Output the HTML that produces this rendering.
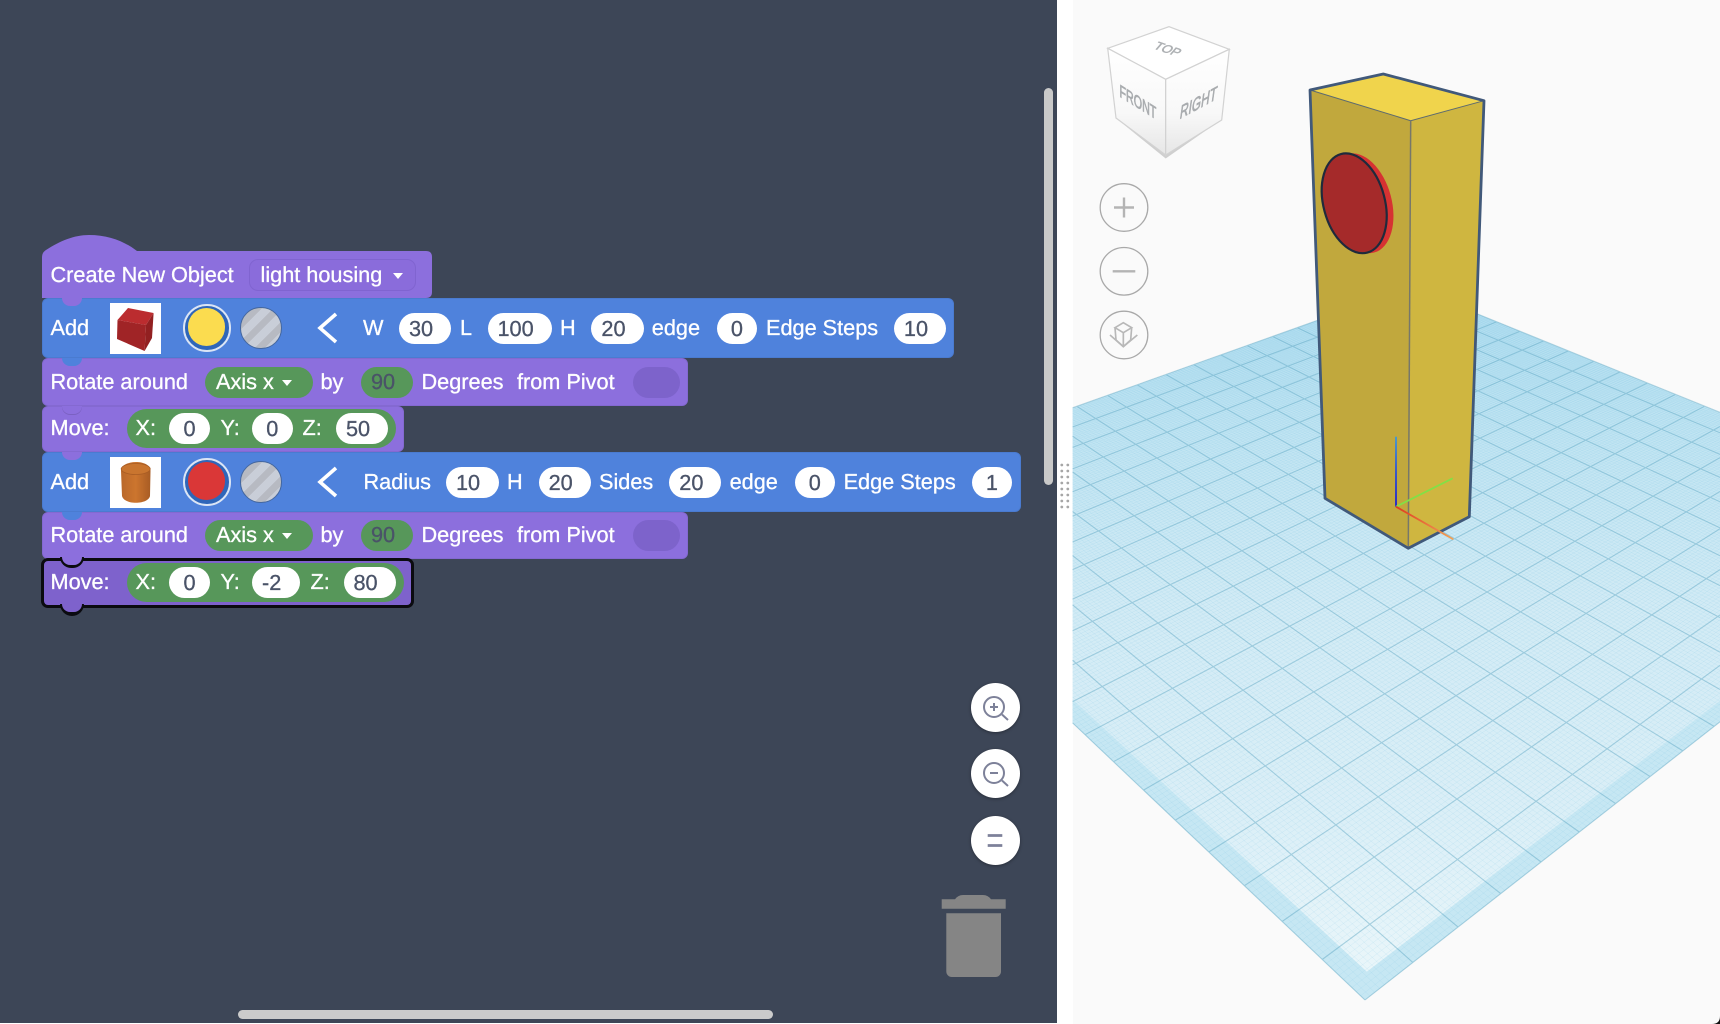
<!DOCTYPE html>
<html><head><meta charset="utf-8"><title>Blocks</title>
<style>
html,body{margin:0;padding:0;width:1720px;height:1024px;overflow:hidden;background:#fff;font-family:"Liberation Sans",Arial,sans-serif;text-rendering:geometricPrecision}
body{filter:blur(.35px)}
#left{position:absolute;left:0;top:0;width:1057px;height:1023px;background:#3d4657}
#view{position:absolute;left:1072.6px;top:0;width:647.4px;height:1024px;background:#fafafa}
.b{position:absolute;border-radius:6px;box-shadow:inset 0 0 0 1px rgba(0,0,0,.05)}
.p{background:#8c6fdd}.u{background:#4f82dc}
.bump{position:absolute;left:62px;width:20px;height:8px;border-radius:0 0 10px 10px}
.r{position:absolute;left:0;width:1050px;height:31px}
.t{position:absolute;top:-1px;line-height:31px;font-size:21.7px;color:#fff;white-space:nowrap;-webkit-text-stroke:.3px currentColor}
.i{position:absolute;top:0;height:31px;border-radius:16px;background:#fff;line-height:31px;font-size:21.7px;color:#4a5368;box-sizing:border-box;padding-left:10px;white-space:nowrap;-webkit-text-stroke:.3px currentColor}
.c{text-align:center;padding-left:0}
.g{position:absolute;background:#57975a;border-radius:20px}
.tri{position:absolute;width:0;height:0;border-left:5px solid transparent;border-right:5px solid transparent;border-top:6px solid #fff;top:13px}
.th{position:absolute;left:110px;width:51px;height:51px;background:#fff}
.sw{position:absolute;left:183.2px;width:47.6px;height:47.6px;border-radius:50%;box-sizing:border-box;border:2.7px solid #dbe5f5;background:#2f66b9}
.sw i{position:absolute;left:2.4px;top:2.4px;width:37.4px;height:37.4px;border-radius:50%;display:block}
.ha{position:absolute;left:240px;width:41.6px;height:41.6px;border-radius:50%;box-sizing:border-box;border:1px solid #44679f;background:repeating-linear-gradient(135deg,#c9ced8 0 8px,#b7bac2 8px 15px)}
.zb{position:absolute;left:970.5px;width:49px;height:49px;border-radius:50%;background:#fff;box-shadow:0 1px 3px rgba(0,0,0,.35)}
svg{position:absolute}
</style></head>
<body>
<div id="left"></div>

<svg style="left:0;top:0" width="1720" height="1024">
<path d="M42 298V258C42 254 43 252 46 250C60 241 74 235 89 235C108 235 124 241 137 251H426C430 251 432 253 432 257V292C432 296 430 298 426 298Z" fill="#8c6fdd"/>
</svg>

<div class="b u" style="left:42px;top:298px;width:912.3px;height:60px"></div>
<div class="b p" style="left:42px;top:358px;width:646.2px;height:48px"></div>
<div class="b p" style="left:42px;top:406px;width:362px;height:46px"></div>
<div class="b u" style="left:42px;top:452px;width:978.7px;height:60px"></div>
<div class="b p" style="left:42px;top:512px;width:646.2px;height:47px"></div>
<div class="b" style="background:#7e62cc;border:3px solid #0b0b10;box-sizing:border-box;border-radius:7px;left:41px;width:372.5px;top:557.5px;height:50.5px;box-shadow:none"></div>

<div class="bump p" style="top:298px"></div>
<div class="bump u" style="top:358px"></div>
<div class="bump p" style="top:406px;box-shadow:0 1px 0 rgba(0,0,0,.12)"></div>
<div class="bump p" style="top:452px"></div>
<div class="bump u" style="top:512px"></div>
<div class="bump" style="top:557px;left:60px;width:24px;height:11px;background:#0b0b10;border-radius:0 0 12px 12px"></div>
<div class="bump p" style="top:557px;height:8px"></div>
<div class="bump" style="top:604px;left:60px;width:24px;height:11.5px;background:#0b0b10;border-radius:0 0 12px 12px"></div>
<div class="bump" style="top:604px;background:#7e62cc;height:8px"></div>

<!-- Create -->
<div class="r" style="top:259.5px">
<div class="t" style="left:50.5px">Create New Object</div>
<div style="position:absolute;left:249px;top:-.5px;width:167px;height:32px;border-radius:9px;border:1px solid #8064d0;box-sizing:border-box;background:#8a6cdb"></div>
<div class="t" style="left:260.5px">light housing</div>
<div class="tri" style="left:393px"></div>
</div>

<!-- Add 1 -->
<div class="th" style="top:303px"></div>
<svg style="left:0;top:0" width="200" height="400">
<polygon points="117.500,320 128,308 153.600,313 146,325" fill="#bb2c2f"/>
<polygon points="117.500,320 146,325 144.600,351 117,339" fill="#a02426"/>
<polygon points="146,325 153.600,313 152,338 144.600,351" fill="#922021"/>
</svg>
<div class="sw" style="top:304px"><i style="background:#fbdc4f"></i></div>
<div class="ha" style="top:307px"></div>
<svg style="left:0;top:0" width="400" height="400"><path d="M336 314L320 328L336 342" fill="none" stroke="#fff" stroke-width="3.600"/></svg>
<div class="r" style="top:312.5px">
<div class="t" style="left:50.5px">Add</div>
<div class="t" style="left:363px">W</div>
<div class="i" style="left:399px;width:52px">30</div>
<div class="t" style="left:460px">L</div>
<div class="i" style="left:487.5px;width:64.5px">100</div>
<div class="t" style="left:560px">H</div>
<div class="i" style="left:591.4px;width:52.2px">20</div>
<div class="t" style="left:651.8px">edge</div>
<div class="i c" style="left:716.8px;width:40.2px">0</div>
<div class="t" style="left:766px">Edge Steps</div>
<div class="i" style="left:893.9px;width:52.1px">10</div>
</div>

<!-- Rotate 1 -->
<div class="r" style="top:366.5px">
<div class="t" style="left:50.5px">Rotate around</div>
<div class="g" style="left:205px;top:0;width:107.5px;height:31px"></div>
<div class="t" style="left:216px">Axis x</div>
<div class="tri" style="left:282px"></div>
<div class="t" style="left:320.5px">by</div>
<div class="g" style="left:361px;top:0;width:51.5px;height:31px"></div>
<div class="t" style="left:371px;color:#4a5368">90</div>
<div class="t" style="left:421.5px">Degrees</div>
<div class="t" style="left:517px">from Pivot</div>
<div class="g" style="left:632.900px;top:0;width:47.1px;height:31px;background:#7d63cb"></div>
</div>

<!-- Move 1 -->
<div class="g" style="left:127px;top:409px;width:269px;height:39px"></div>
<div class="r" style="top:413px">
<div class="t" style="left:50.5px">Move:</div>
<div class="t" style="left:135.5px">X:</div>
<div class="i c" style="left:169px;width:41px">0</div>
<div class="t" style="left:220.5px">Y:</div>
<div class="i c" style="left:252px;width:40.5px">0</div>
<div class="t" style="left:302.5px">Z:</div>
<div class="i" style="left:336px;width:52px">50</div>
</div>

<!-- Add 2 -->
<div class="th" style="top:456.5px"></div>
<svg style="left:0;top:0" width="200" height="520">
<defs><linearGradient id="cy" x1="0" x2="1" y1="0" y2="0"><stop offset="0" stop-color="#b9682a"/><stop offset=".5" stop-color="#cc752e"/><stop offset="1" stop-color="#a85c24"/></linearGradient></defs>
<path d="M121 471C121 459 151 459 150.500 471L150 496C148 505 124 505 122 496Z" fill="url(#cy)"/>
<ellipse cx="135.700" cy="469" rx="14.500" ry="5.500" fill="#c9752f" stroke="#a85c24" stroke-width=".8"/>
</svg>
<div class="sw" style="top:458px"><i style="background:#da3737"></i></div>
<div class="ha" style="top:461px"></div>
<svg style="left:0;top:0" width="400" height="520"><path d="M336 468L320 482L336 496" fill="none" stroke="#fff" stroke-width="3.600"/></svg>
<div class="r" style="top:466.5px">
<div class="t" style="left:50.5px">Add</div>
<div class="t" style="left:363.5px">Radius</div>
<div class="i" style="left:446px;width:52.5px">10</div>
<div class="t" style="left:507px">H</div>
<div class="i" style="left:538.6px;width:52.1px">20</div>
<div class="t" style="left:599px">Sides</div>
<div class="i" style="left:669.3px;width:52.1px">20</div>
<div class="t" style="left:729.6px">edge</div>
<div class="i c" style="left:794.6px;width:40.4px">0</div>
<div class="t" style="left:843.6px">Edge Steps</div>
<div class="i c" style="left:971.8px;width:40.2px">1</div>
</div>

<!-- Rotate 2 -->
<div class="r" style="top:519.5px">
<div class="t" style="left:50.5px">Rotate around</div>
<div class="g" style="left:205px;top:0;width:107.5px;height:31px"></div>
<div class="t" style="left:216px">Axis x</div>
<div class="tri" style="left:282px"></div>
<div class="t" style="left:320.5px">by</div>
<div class="g" style="left:361px;top:0;width:51.5px;height:31px"></div>
<div class="t" style="left:371px;color:#4a5368">90</div>
<div class="t" style="left:421.5px">Degrees</div>
<div class="t" style="left:517px">from Pivot</div>
<div class="g" style="left:632.900px;top:0;width:47.1px;height:31px;background:#7d63cb"></div>
</div>

<!-- Move 2 -->
<div class="g" style="left:127px;top:563px;width:276.5px;height:39px"></div>
<div class="r" style="top:567px">
<div class="t" style="left:50.5px">Move:</div>
<div class="t" style="left:135.5px">X:</div>
<div class="i c" style="left:169px;width:41px">0</div>
<div class="t" style="left:220.5px">Y:</div>
<div class="i" style="left:252px;width:48px">-2</div>
<div class="t" style="left:310.5px">Z:</div>
<div class="i" style="left:343.5px;width:52.5px">80</div>
</div>

<!-- scrollbars -->
<div style="position:absolute;left:1043.5px;top:88px;width:9.5px;height:397px;border-radius:5px;background:#c9c9c9"></div>
<div style="position:absolute;left:238px;top:1010px;width:535px;height:9px;border-radius:5px;background:#cbcbcb"></div>

<!-- zoom buttons -->
<div class="zb" style="top:682.500px"></div>
<div class="zb" style="top:748.500px"></div>
<div class="zb" style="top:815.500px"></div>
<svg style="left:0;top:0" width="1060" height="1024" fill="none" stroke="#7d8199" stroke-width="2">
<circle cx="994" cy="707" r="10"/><path d="M1002 714.500L1008 720M990 707H998M994 703V711"/>
<circle cx="994" cy="773" r="10"/><path d="M1002 780.500L1008 786M990 773H998"/>
<path d="M987.700 835.500H1002.300M987.700 845.500H1002.300" stroke-width="2.800"/>
<path d="M941.700 908.700V899.300H955Q958 895 963 895H983Q988 895 991 899.300H1005.700V908.700Z" fill="#858585" stroke="none"/>
<path d="M946.300 913.300H1001V971.500A5.500 5.500 0 0 1 995.500 977H951.800A5.500 5.500 0 0 1 946.300 971.500Z" fill="#858585" stroke="none"/>
</svg>

<!-- viewer -->
<div id="view"></div>
<svg id="plate" style="left:0;top:0" width="1720" height="1024" viewBox="0 0 1720 1024">
<defs>
<linearGradient id="pg" gradientUnits="userSpaceOnUse" x1="0" y1="290" x2="0" y2="1000">
<stop offset="0" stop-color="#aedcef"/><stop offset=".2" stop-color="#c0e4f2"/><stop offset=".45" stop-color="#d2ebf5"/><stop offset=".75" stop-color="#dbeff7"/><stop offset="1" stop-color="#ecf7fa"/>
</linearGradient>
</defs>
<polygon points="1072.600,408 1411,287 1720,412.600 1720,721.700 1365,1000 1072.600,723" fill="url(#pg)"/>
<path id="band" fill="#c6e7f3"/>
<path id="mn" fill="none" stroke="#7cc4e2" stroke-width=".5" opacity=".22"/>
<path id="mj" fill="none" stroke="#4f9dbd" stroke-width="1.100" opacity=".42"/>
</svg>
<script>
(function(){
var P=[[1411,287],[1980,518],[1365,1000],[831,494]];
var x0=P[0][0],y0=P[0][1],x1=P[1][0],y1=P[1][1],x2=P[2][0],y2=P[2][1],x3=P[3][0],y3=P[3][1];
var dx1=x1-x2,dx2=x3-x2,sx=x0-x1+x2-x3,dy1=y1-y2,dy2=y3-y2,sy=y0-y1+y2-y3,D=dx1*dy2-dx2*dy1;
var g=(sx*dy2-dx2*sy)/D,h=(dx1*sy-sx*dy1)/D;
var a=x1-x0+g*x1,b=x3-x0+h*x3,c=x0,d=y1-y0+g*y1,e=y3-y0+h*y3,f=y0;
var XA=1072.6,XB=1720;
function H(u,v){var w=g*u+h*v+1;return [(a*u+b*v+c)/w,(d*u+e*v+f)/w];}
function seg(A,B){
 if((A[0]<XA&&B[0]<XA)||(A[0]>XB&&B[0]>XB))return '';
 function cut(p,q){var X=p[0]<XA?XA:(p[0]>XB?XB:p[0]);if(X==p[0])return p;var s=(X-q[0])/(p[0]-q[0]);return [X,q[1]+(p[1]-q[1])*s];}
 var p=cut(A,B),q=cut(B,A);
 return 'M'+p[0].toFixed(1)+' '+p[1].toFixed(1)+'L'+q[0].toFixed(1)+' '+q[1].toFixed(1);
}
function clip(pts,X,keepGreater){
 var o=[];
 for(var i=0;i<pts.length;i++){
  var A=pts[i],B=pts[(i+1)%pts.length];
  var ia=keepGreater?A[0]>=X:A[0]<=X, ib=keepGreater?B[0]>=X:B[0]<=X;
  if(ia)o.push(A);
  if(ia!=ib){var s=(X-A[0])/(B[0]-A[0]);o.push([X,A[1]+(B[1]-A[1])*s]);}
 }
 return o;
}
function poly(pts){
 var o=clip(clip(pts,XA,true),XB,false);
 if(!o.length)return '';
 return 'M'+o.map(function(p){return p[0].toFixed(1)+' '+p[1].toFixed(1)}).join('L')+'Z';
}
var mj='',mn='',i,t;
for(i=0;i<=200;i++){t=i/200;
 var s=seg(H(t,0),H(t,1))+seg(H(0,t),H(1,t));
 if(i%10==0)mj+=s;else mn+=s;}
document.getElementById('mj').setAttribute('d',mj);
document.getElementById('mn').setAttribute('d',mn);
var r=1-.018;
document.getElementById('band').setAttribute('d',poly([H(r,0),H(1,0),H(1,1),H(r,1)])+poly([H(0,r),H(1,r),H(1,1),H(0,1)]));
})();
</script>

<svg style="left:0;top:0" width="1720" height="1024">
<defs>
<linearGradient id="fc" x1="0" y1="0" x2="0" y2="1"><stop offset="0" stop-color="#ffffff"/><stop offset=".6" stop-color="#f8f8f8"/><stop offset="1" stop-color="#e6e6e6"/></linearGradient>
<linearGradient id="ax" gradientUnits="userSpaceOnUse" x1="1396" y1="436.700" x2="1396" y2="506.700"><stop offset="0" stop-color="#3f97d8"/><stop offset=".5" stop-color="#2a4fd8"/><stop offset="1" stop-color="#1a1fd0"/></linearGradient>
<linearGradient id="ar" gradientUnits="userSpaceOnUse" x1="1396" y1="507" x2="1453" y2="539"><stop offset="0" stop-color="#e03a1c"/><stop offset="1" stop-color="#f0a45a"/></linearGradient>
</defs>
<!-- cube -->
<polygon points="1117,119 1165.700,158.500 1218,122 1221.700,118 1165.700,150" fill="#cfcfcf"/>
<polygon points="1107.700,48.300 1169,26.700 1229.300,49.300 1165.700,79.300" fill="#fff" stroke="#d2d2d2" stroke-width="1.200"/>
<polygon points="1107.700,48.300 1165.700,79.300 1165.700,155 1116,118" fill="url(#fc)" stroke="#d2d2d2" stroke-width="1.200"/>
<polygon points="1165.700,79.300 1229.300,49.300 1221.700,120 1165.700,155" fill="url(#fc)" stroke="#d2d2d2" stroke-width="1.200"/>
<text transform="matrix(1,.34,-.7,.81,1152.700,48.300)" font-size="12" fill="#aeb1b4" stroke="#aeb1b4" stroke-width=".5" font-family="Liberation Sans">TOP</text>
<text transform="matrix(.608,.38,0,1,1119.500,96.500)" font-size="17.600" fill="#a9acaf" stroke="#a9acaf" stroke-width=".8" font-family="Liberation Sans">FRONT</text>
<text transform="matrix(.61,-.333,-.14,1,1179.300,119.300)" font-size="19.400" fill="#a9acaf" stroke="#a9acaf" stroke-width=".8" font-family="Liberation Sans">RIGHT</text>
<!-- view buttons -->
<g fill="none" stroke="#a9a9a9" stroke-width="1.300">
<circle cx="1124" cy="207.500" r="23.800"/><circle cx="1124" cy="271.300" r="23.800"/><circle cx="1124" cy="335" r="23.800"/>
</g>
<path d="M1114 207.500H1134M1124 197.500V217.500M1112.700 271.300H1135.300" stroke="#b4b4b4" stroke-width="2.400" fill="none"/>
<g transform="translate(1060,0) scale(.33333)" fill="none" stroke="#b8b8b8" stroke-width="5">
<path d="M165 983L190 968L215 983L190 998Z"/><path d="M165 983L168 1020L190 1040L212 1020L215 983M190 998V1040"/><path d="M150 1005L190 1040L232 1005"/>
</g>
<!-- tower -->
<polygon points="1310,90 1410.700,120.700 1408.300,548.300 1325,498.300" fill="#c1a83d"/>
<polygon points="1410.700,120.700 1484,100.700 1469.300,516.700 1408.300,548.300" fill="#cfb640"/>
<polygon points="1310,90 1383.300,74 1484,100.700 1410.700,120.700" fill="#f0d44c"/>
<path d="M1310 90L1410.700 120.700L1484 100.700" fill="none" stroke="#5c6a70" stroke-width="1"/>
<path d="M1410.700 120.700L1408.300 548.300" stroke="#77776a" stroke-width="1.500"/>
<path d="M1310 90L1383.300 74L1484 100.700L1469.300 516.700L1408.300 548.300L1325 498.300Z" fill="none" stroke="#41597a" stroke-width="2.800" stroke-linejoin="round"/>
<!-- disc -->
<ellipse cx="1361" cy="203.300" rx="30.700" ry="51" transform="rotate(-15 1361 203.300)" fill="#d63232"/>
<ellipse cx="1354.200" cy="203.300" rx="30.700" ry="51" transform="rotate(-15 1354.200 203.300)" fill="#a52a2a" stroke="#1f2a3c" stroke-width="2.200"/>
<!-- axes -->
<path d="M1396 436.700V506.700" stroke="url(#ax)" stroke-width="1.800" fill="none"/>
<path d="M1396 506.700L1452.700 478.300" stroke="#82e046" stroke-width="1.800"/>
<path d="M1396 506.700L1453.300 539.300" stroke="url(#ar)" stroke-width="1.800"/>
<!-- splitter dots -->
<g fill="#a6a6a6">
<circle cx="1061.800" cy="465" r="1.400"/><circle cx="1067.800" cy="465" r="1.400"/>
<circle cx="1061.800" cy="471" r="1.400"/><circle cx="1067.800" cy="471" r="1.400"/>
<circle cx="1061.800" cy="477" r="1.400"/><circle cx="1067.800" cy="477" r="1.400"/>
<circle cx="1061.800" cy="483" r="1.400"/><circle cx="1067.800" cy="483" r="1.400"/>
<circle cx="1061.800" cy="489" r="1.400"/><circle cx="1067.800" cy="489" r="1.400"/>
<circle cx="1061.800" cy="495" r="1.400"/><circle cx="1067.800" cy="495" r="1.400"/>
<circle cx="1061.800" cy="501" r="1.400"/><circle cx="1067.800" cy="501" r="1.400"/>
<circle cx="1061.800" cy="507" r="1.400"/><circle cx="1067.800" cy="507" r="1.400"/>
</g>
<path d="M1720 1016Q1720 1024 1712 1024H1720Z" fill="#111"/>
</svg>
</body></html>
